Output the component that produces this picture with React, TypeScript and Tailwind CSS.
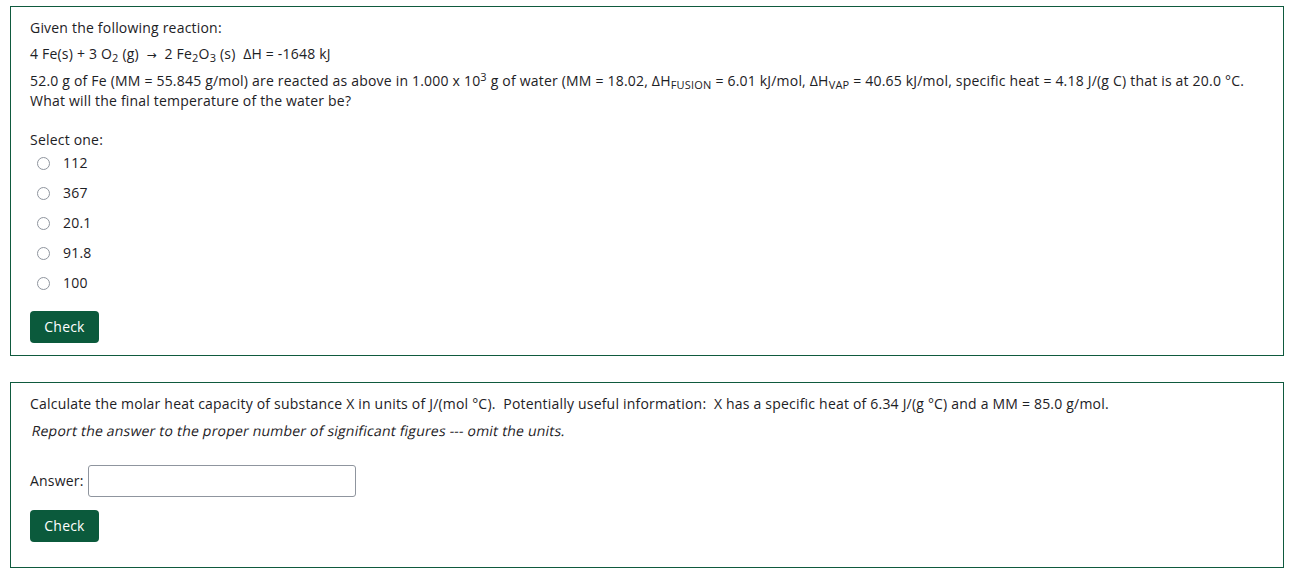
import React from "react";

const options = ["112", "367", "20.1", "91.8", "100"];

function CheckButton() {
  return (
    <button
      type="button"
      className="h-8 w-[69px] rounded-[4px] bg-[#0b5a3c] text-sm text-white"
    >
      Check
    </button>
  );
}

function Sub({ children }: { children: React.ReactNode }) {
  return <sub className="text-[11px] leading-[0]">{children}</sub>;
}

function QuestionOne() {
  return (
    <div className="border border-[#0f5a3e] px-[19px] pt-[11px] pb-[12px]">
      <p className="leading-5">Given the following reaction:</p>
      <p className="mt-[6px] leading-5">
        4 Fe(s) + 3 O<Sub>2</Sub> (g)&nbsp;{" "}
        <span style={{ fontFamily: '"DejaVu Sans", sans-serif' }} className="text-[12px] leading-[0]">
          →
        </span>
        &nbsp; 2 Fe<Sub>2</Sub>O<Sub>3</Sub> (s)&nbsp; ΔH = -1648 kJ
      </p>
      <p className="mt-[7px] leading-5">
        52.0 g of Fe (MM = 55.845 g/mol) are reacted as above in 1.000 x 10
        <sup className="text-[11px] leading-[0]">3</sup> g of water (MM = 18.02, ΔH<Sub>FUSION</Sub> = 6.01 kJ/mol, ΔH
        <Sub>VAP</Sub> = 40.65 kJ/mol, specific heat = 4.18 J/(g C) that is at 20.0 °C.
        <br />
        What will the final temperature of the water be?
      </p>

      <p className="mt-[19px] leading-5">Select one:</p>
      <div className="-mt-0.5 flex flex-col">
        {options.map((opt) => (
          <label key={opt} className="flex h-[30px] items-center">
            <span className="ml-[7px] h-[13px] w-[13px] rounded-full border border-[#8f959e] bg-white" />
            <span className="ml-[13px]">{opt}</span>
          </label>
        ))}
      </div>
      <div className="mt-[13px]">
        <CheckButton />
      </div>
    </div>
  );
}

function QuestionTwo() {
  return (
    <div className="mt-[26px] border border-[#0f5a3e] px-[19px] pt-[11px] pb-[25px]">
      <p className="leading-5">
        Calculate the molar heat capacity of substance X in units of J/(mol °C).&nbsp; Potentially useful information:&nbsp; X has a specific heat of 6.34 J/(g °C) and a MM = 85.0 g/mol.
      </p>
      <p className="mt-[7px] leading-5">
        <span className="inline-block origin-bottom-left -skew-x-[11deg]">
          Report the answer to the proper number of significant figures --- omit the units.
        </span>
      </p>
      <div className="mt-6 flex items-center">
        <span>Answer:</span>
        <input
          type="text"
          className="ml-1 h-8 w-[268px] rounded-[3px] border border-[#8f959e] bg-white px-2 outline-none"
        />
      </div>
      <div className="mt-[13px]">
        <CheckButton />
      </div>
    </div>
  );
}

export default function App() {
  return (
    <div
      className="min-h-screen bg-white pt-[6px] pl-[10px] pr-[9px] text-sm tracking-[0.2px] text-[#1d2125]"
      style={{ fontFamily: '"Open Sans", "Liberation Sans", sans-serif' }}
    >
      <QuestionOne />
      <QuestionTwo />
    </div>
  );
}
